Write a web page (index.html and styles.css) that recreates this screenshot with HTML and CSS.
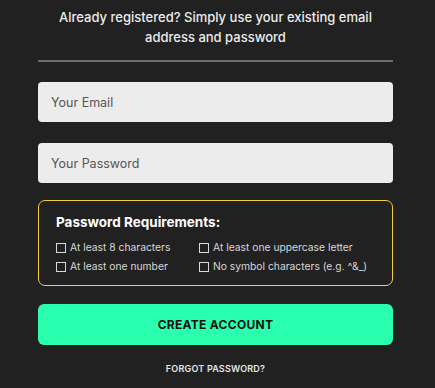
FILE: index.html
```html
<!DOCTYPE html>
<html>
<head>
<meta charset="utf-8">
<link rel="stylesheet" href="styles.css">
</head>
<body>
<div class="page">
  <p class="intro">Already registered? Simply use your existing email address and password</p>
  <hr class="divider">
  <div class="field">Your Email</div>
  <div class="field">Your Password</div>
  <div class="reqs">
    <h3 class="reqs-title">Password Requirements:</h3>
    <div class="reqs-grid">
      <div class="req"><span class="box"></span>At least 8 characters</div>
      <div class="req"><span class="box"></span>At least one uppercase letter</div>
      <div class="req"><span class="box"></span>At least one number</div>
      <div class="req"><span class="box"></span>No symbol characters (e.g. ^&amp;_)</div>
    </div>
  </div>
  <div class="btn">CREATE ACCOUNT</div>
  <div class="forgot">FORGOT PASSWORD?</div>
</div>
</body>
</html>
```
FILE: styles.css
```css
html, body {
  margin: 0;
  padding: 0;
  background: #212121;
  font-family: "Inter", "Open Sans", sans-serif;
}
.page {
  width: 355px;
  margin: 0 0 0 38px;
  padding-top: 7px;
  display: flex;
  flex-direction: column;
}
.intro {
  margin: 0;
  color: #ececec;
  font-size: 13px;
  font-weight: 500;
  line-height: 20px;
  text-align: center;
  padding: 0 14px;
}
.divider {
  margin: 13px 0 0 0;
  border: 0;
  height: 2px;
  background: #6e6e6e;
}
.field {
  margin-top: 20px;
  height: 40px;
  box-sizing: border-box;
  background: #ececec;
  border-radius: 4px;
  padding: 0 13px;
  display: flex;
  align-items: center;
  color: #555;
  font-size: 12.5px;
}
.field + .field {
  margin-top: 21px;
}
.reqs {
  margin-top: 17px;
  height: 86px;
  box-sizing: border-box;
  border: 1.5px solid #f5cd45;
  border-radius: 7px;
  padding: 12px 17px 0 17px;
}
.reqs-title {
  margin: 0;
  color: #fff;
  font-size: 13.5px;
  font-weight: 700;
  line-height: 18px;
}
.reqs-grid {
  margin-top: 9px;
  display: grid;
  grid-template-columns: 143px 1fr;
  row-gap: 4px;
}
.req {
  display: flex;
  align-items: center;
  color: #d8d8d8;
  font-size: 10.3px;
  line-height: 15px;
  white-space: nowrap;
}
.box {
  width: 8px;
  height: 8px;
  border: 1px solid #d8d8d8;
  margin-right: 4px;
  flex: none;
}
.btn {
  margin-top: 18px;
  height: 41px;
  background: #29ffae;
  border-radius: 6px;
  display: flex;
  align-items: center;
  justify-content: center;
  color: #111;
  font-size: 12px;
  font-weight: 700;
  letter-spacing: 0.3px;
}
.forgot {
  margin-top: 18px;
  text-align: center;
  color: #e6e6e6;
  font-size: 9px;
  font-weight: 600;
  letter-spacing: 0.2px;
}
```
